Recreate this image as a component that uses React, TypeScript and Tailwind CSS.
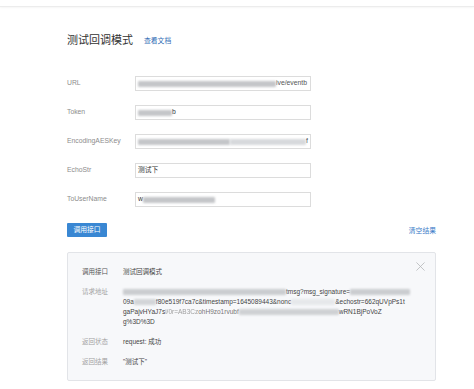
import React from "react"

const fontClass = "font-['Liberation_Sans','Noto_Sans_CJK_SC',sans-serif]"

function Blur({ w, tone = "bg-[#c4c6c9]" }: { w: number; tone?: string }) {
  return <span className={`inline-block h-[6px] rounded-[1px] ${tone} blur-[1px]`} style={{ width: w }} />
}

function FormRow({ label, children }: { label: string; children: React.ReactNode }) {
  return (
    <div className="flex h-[15px] items-center">
      <div className="w-[68px] text-[6.8px] leading-none text-[#8c8c8c]">{label}</div>
      <div className="flex h-[15px] w-[176px] items-center overflow-hidden border border-[#dcdcdc] bg-white px-[2px] text-[6.8px] leading-none text-[#333]">
        {children}
      </div>
    </div>
  )
}

function ResultRow({ label, dark, children }: { label: string; dark?: boolean; children: React.ReactNode }) {
  return (
    <div className="flex">
      <div className={`w-[41px] shrink-0 text-[6.5px] leading-[10px] ${dark ? "text-[#555]" : "text-[#a3a3a3]"}`}>{label}</div>
      <div className="text-[6.5px] leading-[10px] text-[#444]">{children}</div>
    </div>
  )
}

export default function App() {
  return (
    <div className={`min-h-[389px] w-[474px] bg-white ${fontClass}`}>
      <div className="h-[7px] border-b border-[#ececec] shadow-[0_1px_2px_rgba(0,0,0,0.04)]" />

      <div className="ml-[67px] w-[369px]">
        <div className="mt-[25px] flex h-[16px] items-end">
          <h1 className="text-[11px] leading-[16px] text-[#333]">测试回调模式</h1>
          <a className="mb-[3px] ml-[11px] text-[6.8px] leading-none text-[#2f6db5]">查看文档</a>
        </div>

        <div className="mt-[28px] flex flex-col gap-[14px]">
          <FormRow label="URL">
            <Blur w={138} />
            <span className="whitespace-nowrap text-[#555]">ive/eventb</span>
          </FormRow>
          <FormRow label="Token">
            <Blur w={34} />
            <span>b</span>
          </FormRow>
          <FormRow label="EncodingAESKey">
            <Blur w={92} />
            <Blur w={76} tone="bg-[#d7d9dc]" />
            <span>f</span>
          </FormRow>
          <FormRow label="EchoStr">
            <span>测试下</span>
          </FormRow>
          <FormRow label="ToUserName">
            <span>w</span>
            <Blur w={72} />
          </FormRow>
        </div>

        <div className="mt-[16px] flex items-center justify-between">
          <button className="h-[14px] w-[40px] rounded-[1px] bg-[#3987d3] text-[6.8px] leading-none text-white">调用接口</button>
          <a className="mt-[2px] text-[6.8px] leading-none text-[#3a7bc8]">清空结果</a>
        </div>

        <div className="relative mt-[15px] flex flex-col gap-[10px] rounded-[2px] border border-[#e2e4e8] bg-[#f7f8fa] pb-[13px] pl-[14px] pr-[14px] pt-[14px]">
          <svg className="absolute right-[10px] top-[9px] h-[9px] w-[9px]" viewBox="0 0 10 10" fill="none" stroke="#b5b7ba" strokeWidth="0.9">
            <path d="M0.5 0.5L9.5 9.5M9.5 0.5L0.5 9.5" />
          </svg>
          <ResultRow label="调用接口" dark>
            测试回调模式
          </ResultRow>
          <ResultRow label="请求地址">
            <div className="flex h-[10px] items-center whitespace-nowrap">
              <Blur w={163} tone="bg-[#cbcdd0]" />
              <span>tmsg?msg_signature=</span>
              <Blur w={60} tone="bg-[#cbcdd0]" />
            </div>
            <div className="flex h-[10px] items-center whitespace-nowrap">
              <span>09a</span>
              <Blur w={22} tone="bg-[#d3d5d8]" />
              <span>f80e519f7ca7c&amp;timestamp=1645089443&amp;nonc</span>
              <Blur w={44} tone="bg-[#e6e8eb]" />
              <span>&amp;echostr=662qUVpPs1t</span>
            </div>
            <div className="flex h-[10px] items-center whitespace-nowrap">
              <span>gaPajvHYaJ7s</span>
              <span className="text-[#a0a0a0] blur-[0.6px]">i/0r=AB3Cz</span>
              <span className="text-[#777]">ohH9zo1rvubf</span>
              <Blur w={100} tone="bg-[#cfd1d4]" />
              <span>wRN1BjPoVoZ</span>
            </div>
            <div className="flex h-[10px] items-center">g%3D%3D</div>
          </ResultRow>
          <ResultRow label="返回状态">request: 成功</ResultRow>
          <ResultRow label="返回结果">"测试下"</ResultRow>
        </div>
      </div>
    </div>
  )
}
